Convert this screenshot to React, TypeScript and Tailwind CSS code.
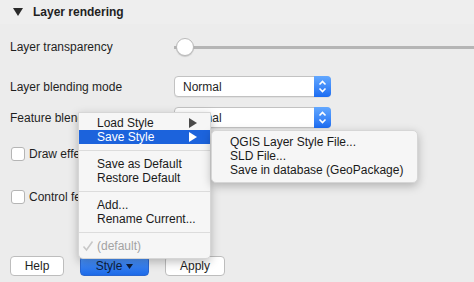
import React from "react";

const Arrow = ({ white }: { white?: boolean }) => (
  <svg width="8" height="10" viewBox="0 0 8 10">
    <path d="M0 0 L8 5 L0 10 Z" fill={white ? "#ffffff" : "#4a4a4a"} />
  </svg>
);

const Combo = ({ value }: { value: string }) => (
  <div className="flex w-[157px] h-[21px] rounded-[4px] border border-[#c2c2c2] bg-white shadow-[0_1px_0_rgba(0,0,0,0.05)]">
    <div className="flex-1 flex items-center pl-[8px]">{value}</div>
    <div className="w-[17px] -my-px -mr-px rounded-r-[4px] bg-gradient-to-b from-[#63a8ff] to-[#1b6cf2] flex items-center justify-center">
      <svg width="9" height="13" viewBox="0 0 9 13">
        <path d="M1.5 4.5 L4.5 1.5 L7.5 4.5 M1.5 8.5 L4.5 11.5 L7.5 8.5" stroke="#fff" strokeWidth="1.6" fill="none" />
      </svg>
    </div>
  </div>
);

const Check = ({ label }: { label: string }) => (
  <div className="flex items-center h-[14px] pl-[11px] gap-[4px]">
    <div className="w-[14px] h-[14px] rounded-[3px] border border-[#b5b5b5] bg-white" />
    <span>{label}</span>
  </div>
);

const Item = ({ label, hl, sub, muted }: { label: string; hl?: boolean; sub?: boolean; muted?: boolean }) => (
  <div
    className={
      "relative flex items-center h-[14px] pl-[18px] pr-[13px] " +
      (hl ? "bg-[#1c63dc] text-white" : muted ? "text-[#a3a3a3]" : "text-[#1a1a1a]")
    }
  >
    {muted && (
      <svg className="absolute left-[3px] top-[1px]" width="12" height="12" viewBox="0 0 12 12">
        <path d="M1.5 6.5 L4.5 10 L10.5 1.5" stroke="#c8c8c8" strokeWidth="1.6" fill="none" />
      </svg>
    )}
    <span className="flex-1">{label}</span>
    {sub && <Arrow white={hl} />}
  </div>
);

const Sep = () => <div className="h-[13px] flex items-center"><div className="h-px w-full bg-[#dcdcdc]" /></div>;

export default function App() {
  return (
    <div className="relative w-[474px] h-[282px] overflow-hidden bg-[#ececec] text-[12px] text-[#1f1f1f] font-['Liberation_Sans',Arial,sans-serif]">
      <div className="flex items-center h-[24px] pl-[13px] gap-[10px] bg-[#eeeeee]">
        <svg width="10" height="8" viewBox="0 0 10 8">
          <path d="M0 0 L10 0 L5 8 Z" fill="#2a2a2a" />
        </svg>
        <span className="font-bold">Layer rendering</span>
      </div>

      <div className="flex items-center h-[22px] mt-[12px] pl-[10px]">
        <span className="w-[164px]">Layer transparency</span>
        <div className="relative flex-1 h-[18px] flex items-center">
          <div className="h-[3px] w-full bg-[#b5b5b5]" />
          <div className="absolute left-[2px] top-0 w-[18px] h-[18px] rounded-full bg-white border border-[#b9b9b9] shadow-[0_1px_1px_rgba(0,0,0,0.15)]" />
        </div>
      </div>

      <div className="flex items-center h-[21px] mt-[18px] pl-[10px]">
        <span className="w-[164px]">Layer blending mode</span>
        <Combo value="Normal" />
      </div>

      <div className="flex items-center h-[21px] mt-[10px] pl-[10px]">
        <span className="w-[164px]">Feature blending mode</span>
        <Combo value="Normal" />
      </div>

      <div className="mt-[19px]">
        <Check label="Draw effects" />
      </div>
      <div className="mt-[29px]">
        <Check label="Control feature rendering order" />
      </div>

      <div className="flex items-center gap-[16px] pl-[10px] mt-[52px]">
        <button className="w-[54px] h-[20px] rounded-[4px] border border-[#bdbdbd] bg-white">Help</button>
        <button className="w-[69px] h-[20px] rounded-[4px] border border-[#2a66d0] bg-gradient-to-b from-[#4f97fb] to-[#1d6ae8] text-[#0f1e3a] flex items-center justify-center gap-[4px]">
          Style
          <svg width="7" height="5" viewBox="0 0 7 5">
            <path d="M0 0 L7 0 L3.5 5 Z" fill="#0f1e3a" />
          </svg>
        </button>
        <button className="w-[60px] h-[20px] rounded-[4px] border border-[#bdbdbd] bg-white">Apply</button>
      </div>

      <div className="absolute left-[78px] top-[112px] w-[133px] pt-[3px] pb-[5px] bg-[#f6f6f6] rounded-b-[5px] border border-[#d6d6d6] shadow-[0_3px_10px_rgba(0,0,0,0.25)]">
        <Item label="Load Style" sub />
        <Item label="Save Style" sub hl />
        <Sep />
        <Item label="Save as Default" />
        <Item label="Restore Default" />
        <Sep />
        <Item label="Add..." />
        <Item label="Rename Current..." />
        <Sep />
        <Item label="(default)" muted />
      </div>

      <div className="absolute left-[211px] top-[130px] w-[207px] pt-[4px] pb-[5px] bg-[#f6f6f6] rounded-[5px] border border-[#d6d6d6] shadow-[0_3px_10px_rgba(0,0,0,0.25)]">
        <Item label="QGIS Layer Style File..." />
        <Item label="SLD File..." />
        <Item label="Save in database (GeoPackage)" />
      </div>
    </div>
  );
}
